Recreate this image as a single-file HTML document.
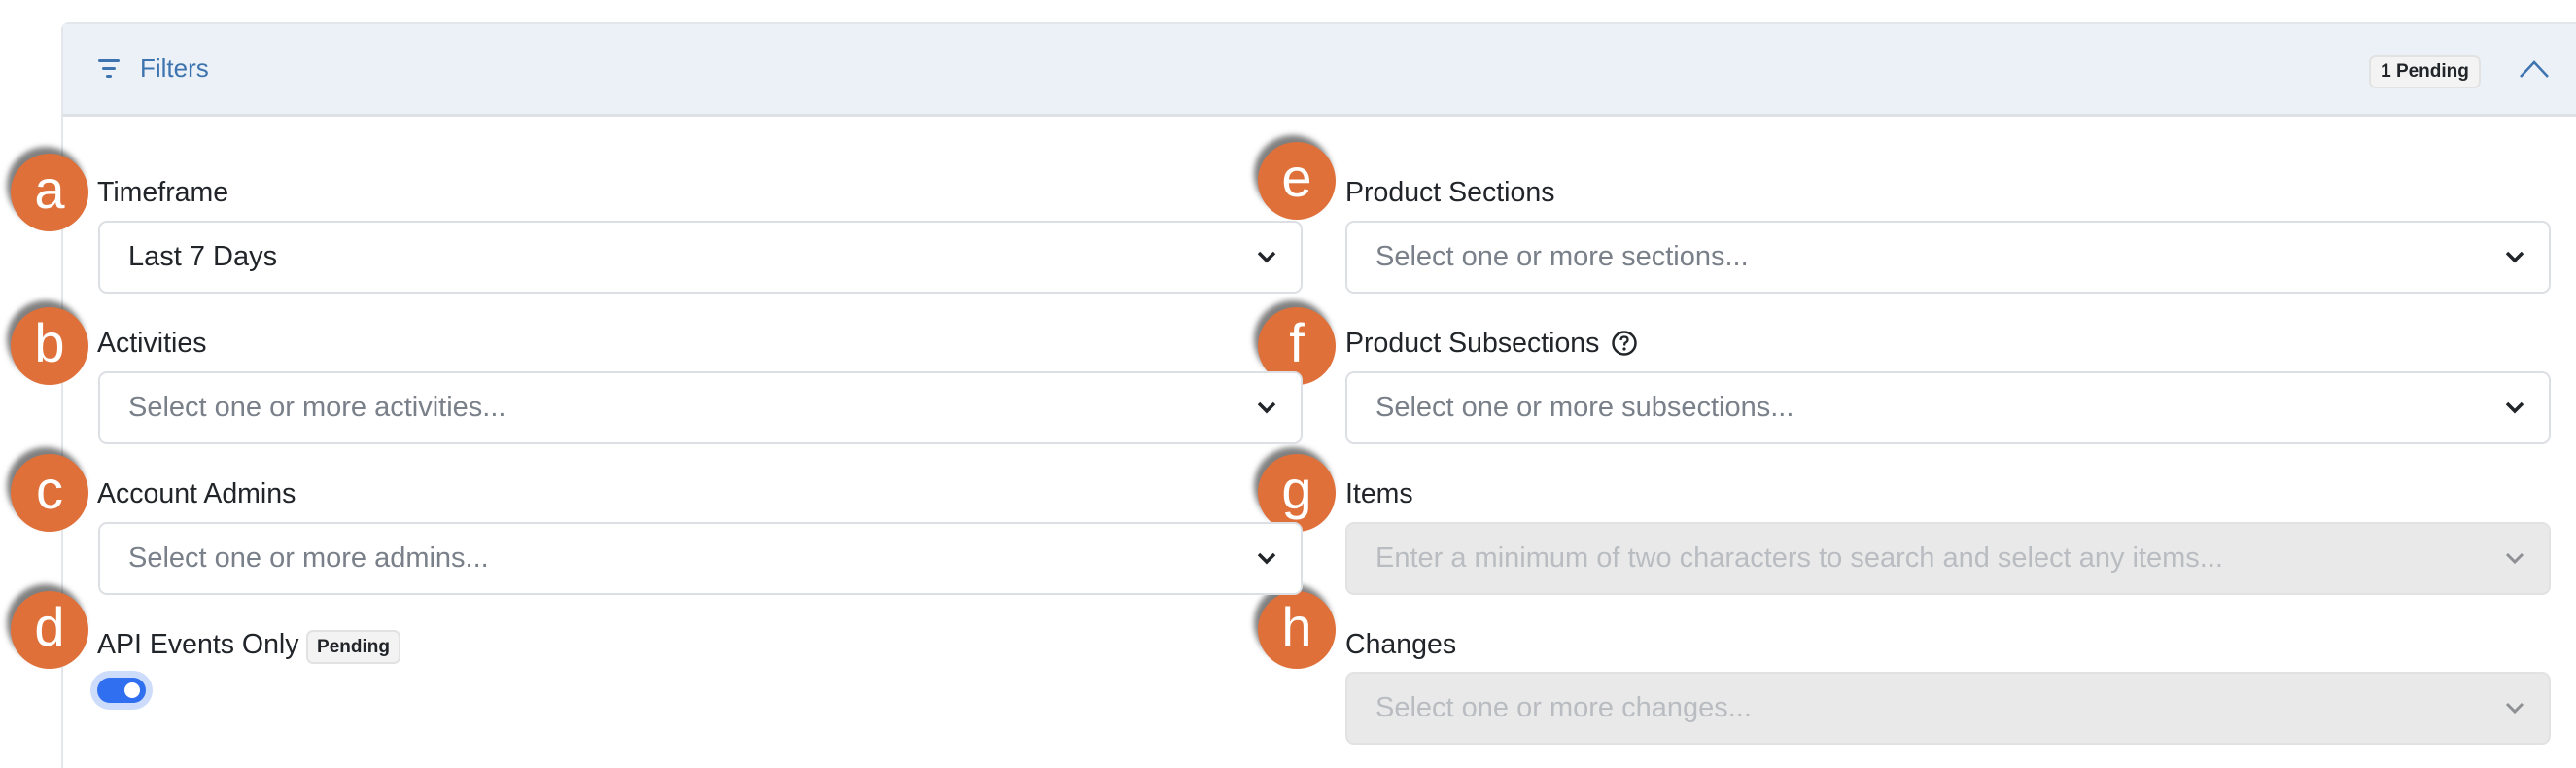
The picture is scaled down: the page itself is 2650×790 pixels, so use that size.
<!DOCTYPE html>
<html><head><style>
html,body{margin:0;width:2650px;height:790px;overflow:hidden;}
body{background:#fff;position:relative;font-family:"Liberation Sans",Arial,sans-serif;}
.panel{position:absolute;left:63px;top:23px;width:2587px;height:767px;border:2px solid #e3e6ea;border-bottom:none;border-right:none;border-radius:8px 0 0 0;box-sizing:border-box;}
.hdr{position:absolute;left:65px;top:25px;right:0;height:92px;background:#ecf1f8;border-bottom:3px solid #dde1e6;}
.ab{position:absolute;}
.lbl{position:absolute;font-size:28.5px;color:#212529;line-height:32px;}
.sel{position:absolute;height:75px;border:2px solid #dcdfe3;border-radius:9px;box-sizing:border-box;background:#fff;font-size:29px;color:#7a8089;line-height:71px;padding-left:29px;}
.sel.dis{background:#e9e9e9;color:#b9bcc1;border-color:#e2e2e2;}
.sel svg{position:absolute;right:24px;top:28px;}
.c{position:absolute;width:80px;height:80px;border-radius:50%;background:#e0703a;color:#fff;font-size:56px;text-align:center;line-height:74px;box-shadow:-4px -7px 6px rgba(0,0,0,.5);}
.badge{position:absolute;background:#f3f3f3;border:2px solid #e2e2e2;border-radius:7px;box-sizing:border-box;font-size:19px;font-weight:bold;color:#212529;text-align:center;}
</style></head><body>
<div class="panel"></div>
<div class="hdr"></div>
<svg class="ab" style="left:99px;top:60px" width="26" height="22" viewBox="0 0 26 22"><rect x="2" y="1" width="22" height="3" rx="1.5" fill="#3d74b0"/><rect x="6" y="9" width="14" height="3" rx="1.5" fill="#3d74b0"/><rect x="10" y="17" width="6" height="3" rx="1.5" fill="#3d74b0"/></svg>
<div class="ab" style="left:144px;top:55px;font-size:26px;color:#3d74b0;line-height:30px">Filters</div>
<div class="badge" style="left:2437px;top:57px;width:115px;height:34px;line-height:30px">1 Pending</div>
<svg class="ab" style="left:2591px;top:62px" width="32" height="18" viewBox="0 0 32 18"><path d="M2 17 L16 2 L30 17" fill="none" stroke="#3d74b0" stroke-width="2.5"/></svg>

<div class="c" style="left:11px;top:158px">a</div>
<div class="c" style="left:11px;top:316px">b</div>
<div class="c" style="left:11px;top:467px">c</div>
<div class="c" style="left:11px;top:608px">d</div>
<div class="c" style="left:1294px;top:146px">e</div>
<div class="c" style="left:1294px;top:316px">f</div>
<div class="c" style="left:1294px;top:467px">g</div>
<div class="c" style="left:1294px;top:608px">h</div>

<div class="lbl" style="left:100px;top:182px">Timeframe</div>
<div class="sel" style="left:101px;top:227px;width:1239px;color:#212529">Last 7 Days<svg width="22" height="14" viewBox="0 0 22 14"><path d="M3 3 L11 11 L19 3" fill="none" stroke="#212529" stroke-width="3.5"/></svg></div>
<div class="lbl" style="left:100px;top:337px">Activities</div>
<div class="sel" style="left:101px;top:382px;width:1239px">Select one or more activities...<svg width="22" height="14" viewBox="0 0 22 14"><path d="M3 3 L11 11 L19 3" fill="none" stroke="#212529" stroke-width="3.5"/></svg></div>
<div class="lbl" style="left:100px;top:492px">Account Admins</div>
<div class="sel" style="left:101px;top:537px;width:1239px">Select one or more admins...<svg width="22" height="14" viewBox="0 0 22 14"><path d="M3 3 L11 11 L19 3" fill="none" stroke="#212529" stroke-width="3.5"/></svg></div>
<div class="lbl" style="left:100px;top:647px">API Events Only</div>
<div class="badge" style="left:315px;top:648px;width:97px;height:35px;line-height:31px">Pending</div>
<div class="ab" style="left:93px;top:690px;width:64px;height:40px;border-radius:20px;background:#cddcfb"></div>
<div class="ab" style="left:100px;top:697px;width:50px;height:26px;border-radius:13px;background:#2f6ff0"></div>
<div class="ab" style="left:128px;top:702px;width:16px;height:16px;border-radius:50%;background:#fff"></div>

<div class="lbl" style="left:1384px;top:182px">Product Sections</div>
<div class="sel" style="left:1384px;top:227px;width:1240px">Select one or more sections...<svg width="22" height="14" viewBox="0 0 22 14"><path d="M3 3 L11 11 L19 3" fill="none" stroke="#212529" stroke-width="3.5"/></svg></div>
<div class="lbl" style="left:1384px;top:337px">Product Subsections</div>
<svg class="ab" style="left:1657px;top:339px" width="28" height="28" viewBox="0 0 28 28"><circle cx="14" cy="14" r="11.5" fill="none" stroke="#212529" stroke-width="2.5"/><path d="M10.5 11 Q10.5 7.5 14 7.5 Q17.5 7.5 17.5 10.5 Q17.5 12.5 14.5 14 L14 16.5" fill="none" stroke="#212529" stroke-width="2.3"/><circle cx="14" cy="20" r="1.6" fill="#212529"/></svg>
<div class="sel" style="left:1384px;top:382px;width:1240px">Select one or more subsections...<svg width="22" height="14" viewBox="0 0 22 14"><path d="M3 3 L11 11 L19 3" fill="none" stroke="#212529" stroke-width="3.5"/></svg></div>
<div class="lbl" style="left:1384px;top:492px">Items</div>
<div class="sel dis" style="left:1384px;top:537px;width:1240px">Enter a minimum of two characters to search and select any items...<svg width="22" height="14" viewBox="0 0 22 14"><path d="M3 3 L11 11 L19 3" fill="none" stroke="#8e9094" stroke-width="3"/></svg></div>
<div class="lbl" style="left:1384px;top:647px">Changes</div>
<div class="sel dis" style="left:1384px;top:691px;width:1240px">Select one or more changes...<svg width="22" height="14" viewBox="0 0 22 14"><path d="M3 3 L11 11 L19 3" fill="none" stroke="#8e9094" stroke-width="3"/></svg></div>
</body></html>
